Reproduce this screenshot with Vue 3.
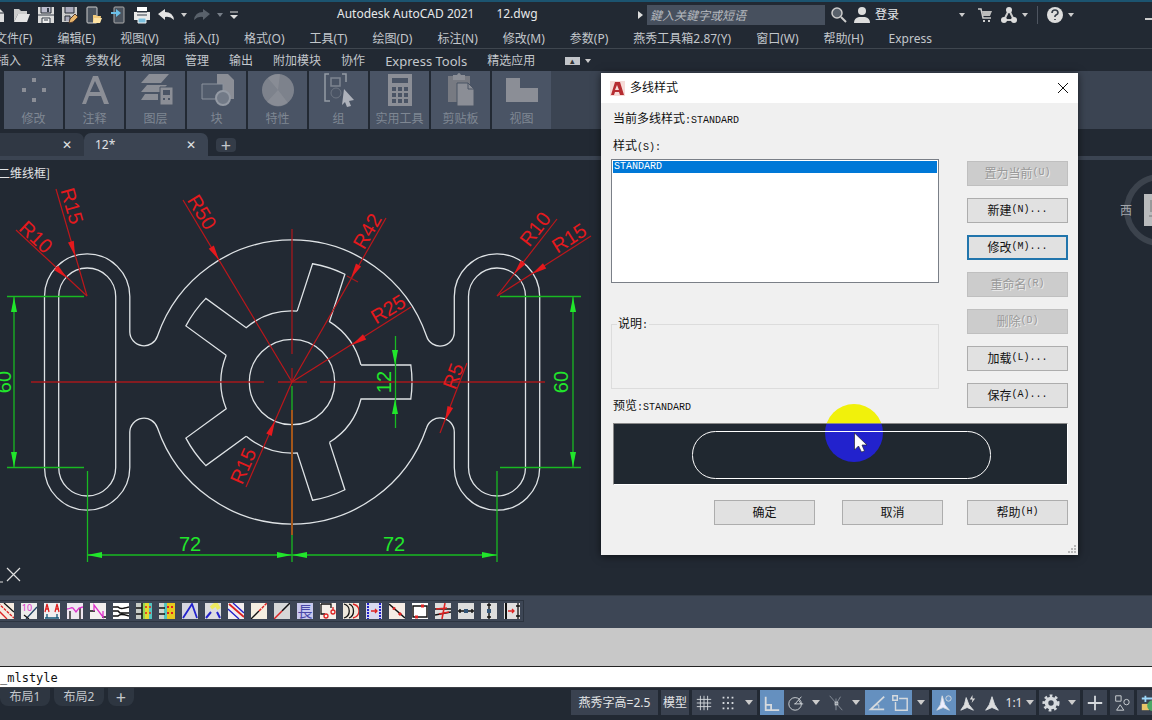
<script setup>
import { ref } from 'vue'

const menus = ['文件(F)', '编辑(E)', '视图(V)', '插入(I)', '格式(O)', '工具(T)', '绘图(D)', '标注(N)', '修改(M)', '参数(P)', '燕秀工具箱2.87(Y)', '窗口(W)', '帮助(H)', 'Express']
const ribbonTabs = ['插入', '注释', '参数化', '视图', '管理', '输出', '附加模块', '协作', 'Express Tools', '精选应用']

const search = ref('')
const style = ref('STANDARD')
const command = ref('_mlstyle')

const sideButtons = [
  { zh: '置为当前', en: '(U)', disabled: true },
  { zh: '新建', en: '(N)...' },
  { zh: '修改', en: '(M)...', active: true },
  { zh: '重命名', en: '(R)', disabled: true },
  { zh: '删除', en: '(D)', disabled: true },
  { zh: '加载', en: '(L)...' },
  { zh: '保存', en: '(A)...' }
]

// arrow head with its tip at (x, y), coming from (fx, fy)
const arrow = (x, y, fx, fy) => {
  const len = Math.hypot(x - fx, y - fy)
  const ux = (x - fx) / len
  const uy = (y - fy) / len
  const bx = x - ux * 15
  const by = y - uy * 15
  return `${x},${y} ${bx - uy * 3},${by + ux * 3} ${bx + uy * 3},${by - ux * 3}`
}

// radius dimensions: line from p to c, arrow tip at t, label position l, angle a
const radii = [
  { text: 'R10', p: [16, 230], c: [87, 296], t: [67, 278], l: [36, 237], a: 43 },
  { text: 'R15', p: [56, 189], c: [87, 296], t: [75, 256], l: [72, 206], a: 74 },
  { text: 'R50', p: [183, 200], c: [292, 382], t: [219, 260], l: [202, 212], a: 59 },
  { text: 'R42', p: [386, 218], c: [292, 382], t: [351, 278], l: [367, 231], a: -60 },
  { text: 'R25', p: [411, 307], c: [292, 382], t: [352, 345], l: [388, 309], a: -31 },
  { text: 'R10', p: [557, 219], c: [497, 296], t: [514, 274], l: [535, 229], a: -52 },
  { text: 'R15', p: [591, 236], c: [497, 296], t: [532, 274], l: [569, 238], a: -32 },
  { text: 'R5', p: [467, 363], c: [440, 433], t: [445, 421], l: [453, 376], a: -70 },
  { text: 'R15', p: [246, 487], c: [292, 382], t: [275, 421], l: [243, 466], a: -66 }
]

const dimArrows = [
  [14, 297, 14, 340], [14, 467, 14, 400],
  [573, 297, 573, 340], [573, 467, 573, 400],
  [87, 555, 120, 555], [292, 555, 260, 555],
  [292, 555, 320, 555], [497, 555, 460, 555],
  [395, 365, 395, 340], [395, 399, 395, 420]
]

const dimTexts = [
  { text: '60', l: [4, 382], a: -90 },
  { text: '60', l: [561, 382], a: -90 },
  { text: '12', l: [384, 382], a: -90 },
  { text: '72', l: [190, 544], a: 0 },
  { text: '72', l: [394, 544], a: 0 }
]

const K = '#111'
const R = '#d22'
const B = '#22c'
const M = '#d3c'
const tools = [
  { bg: '#f5ebe0', s: [[K, 'M6 0L16 9'], [R, 'M0 0L16 15', 1.3, '3 1'], [R, 'M0 7L9 16']] },
  { bg: '#ececec', t: '10', tc: M, s: [['#246', 'M5 16L16 4'], [K, 'M3 12L8 16']] },
  { bg: '#f1eeee', s: [[R, 'M1 9L3 1L5 9M2 6H5M11 9L13 1L15 9M12 6H15'], ['#157', 'M3 15V11M13 15V11M1 15H15']] },
  { bg: '#efe8f0', s: [[K, 'M3 16V8M13 16V5'], [M, 'M0 6C3 6 4 4 6 5L9 9L12 5L16 4']] },
  { bg: '#f4f0ef', s: [[K, 'M0 8H5M12 14H16'], [M, 'M4 8V2L13 14V8']] },
  { bg: '#fff', s: [[K, 'M0 4H5C7 6 9 6 16 4M0 8H5L7 10H16M0 13H5C7 11 9 11 16 13', 1.6]] },
  { bg: '#c9cdc8', s: [['#8fd45a', 'M8 0V16', 3], ['#e3db2e', 'M11 0V16', 4], ['#55c4c0', 'M14.500 0V16', 3], [K, 'M0 5H6M0 11H6M6 0V16', 1.6], [R, 'M9 4H15M9 10H15', 1.3, '2']] },
  { bg: '#d0d4d0', s: [['#55c4c0', 'M7 0V16', 4], ['#e8c81e', 'M12 0V16', 8], [K, 'M0 5H6M0 11H6', 1.6], [R, 'M8 4H16M8 10H16', 2, '2']] },
  { bg: '#d5d5df', s: [[B, 'M1 15L10 1L15 15', 1.8]] },
  { bg: '#dcdcdf', s: [['#eeea60', 'M6 5L11 1L14 6', 4], [B, 'M1 15L6 9M12 9L15 15', 2]] },
  { bg: '#f3eeee', s: [[B, 'M5 0L16 10M0 6L11 16'], [R, 'M1 1L16 14', 1.8]] },
  { bg: '#f5eee0', s: [[K, 'M0 16L8 8'], [R, 'M8 8L16 0', 1.5, '3 1']] },
  { bg: '#d7d7d7', s: [[K, 'M8 8L16 0', 1.5], [R, 'M0 16L8 8', 1.5]] },
  { bg: '#c9c9ee', t: '長', tc: '#4a48a8', s: [] },
  { bg: '#f5efe9', s: [[K, 'M1 1H11V5M1 1V11H5'], [R, 'M4 13A2 2 0 1 0 8 13A2 2 0 1 0 4 13M11 9A2 2 0 1 0 15 9A2 2 0 1 0 11 9M13 4V7']] },
  { bg: '#eee8dc', s: [[K, 'M1 1C8 3 8 13 1 15'], [K, 'M6 1C12 3 12 13 6 15'], [R, 'M10 1C18 3 18 13 10 15']] },
  { bg: '#d9d9ee', s: [[B, 'M2 0V16M14 0V16', 2, '2 1'], [R, 'M5 8H11M9 6L11 8L9 10']] },
  { bg: '#f5ece5', s: [[K, 'M0 1L16 15', 1.5], [R, 'M4 5L6 6M10 10L12 12', 3]] },
  { bg: '#fff', s: [[K, 'M1 3H15V14H1Z', 1.5], [R, 'M9 3H12M3 14H6', 3]] },
  { bg: '#ddd', s: [[K, 'M0 6H16M0 12L16 9', 1.6], [R, 'M10 0L7 16M1 6L12 5M4 11L14 9', 1.6]] },
  { bg: '#ddd', s: [[K, 'M0 8H16M2 6V10M14 6V10', 1.4], ['#357', 'M7 7H9V9H7Z', 2]] },
  { bg: '#ddd', s: [[K, 'M8 0V16M6 2H10M6 14H10', 1.4], ['#357', 'M7 7H9V9H7Z', 2]] },
  { bg: '#e2dfdf', s: [[K, 'M2 0V16', 2], [K, 'M14 0V16M12 3H16M12 13H16'], [R, 'M4 8H10M8 6L10 8L8 10']] }
]
</script>

<template>
  <div class="app">
    <header class="titlebar">
      <div class="quick">
        <button aria-label="新建"><svg width="18" height="18" viewBox="0 0 18 18"><path d="M3 2h7l5 5v9H3z" fill="#ddd" /><path d="M10 2v5h5" fill="none" stroke="#222933" /></svg></button>
        <button aria-label="打开"><svg width="18" height="18" viewBox="0 0 18 18"><path d="M1 3h5l2 2h6v3H5l-4 8z" fill="#ccc" /><path d="M5 8h12l-3 8H1z" fill="#e4e4e4" /></svg></button>
        <button aria-label="保存"><svg width="18" height="18" viewBox="0 0 18 18"><path d="M1 1h16v16H1z" fill="#ddd" /><path d="M4 1v6h10V1" fill="#bbc" stroke="#222933" /><path d="M10 2h2v4h-2z" fill="#333b46" /><path d="M1 9h16M5 17v-5h8v5" fill="#eee" stroke="#333b46" /><path d="M7 14h4" stroke="#333b46" /></svg></button>
        <button aria-label="另存为"><svg width="18" height="18" viewBox="0 0 18 18"><path d="M1 1h15v9l-7 6H1z" fill="#ccc" /><path d="M4 1v6h9V1M4 15v-5h5v5" fill="#aab" stroke="#222933" /><path d="M8 17l1-4 5-5 3 3-5 5z" fill="#e8b56c" stroke="#563b2b" /></svg></button>
        <button aria-label="从移动设备打开"><svg width="18" height="18" viewBox="0 0 18 18"><rect x="2" y="1" width="10" height="16" rx="1" fill="#4b535e" stroke="#ccc" /><path d="M8 9h3l1 1h4l-1 7H8z" fill="#f3ca7a" /><path d="M9 12h8l-2 5H8z" fill="#ffe4a5" /></svg></button>
        <button aria-label="保存到移动设备"><svg width="18" height="18" viewBox="0 0 18 18"><rect x="5" y="1" width="10" height="16" rx="1" fill="#4b535e" stroke="#aaa" /><path d="M2 6h5V3l5 4-5 4V8H2z" fill="#6cc0e8" /></svg></button>
        <button aria-label="打印"><svg width="18" height="18" viewBox="0 0 18 18"><path d="M4 1h10v4H4z" fill="#fff" /><path d="M1 6h16v8H1z" fill="#e8e8e8" /><path d="M4 9h10M4 6h10" stroke="#333b46" /><path d="M5 12h8v5H5z" fill="#7cc0de" stroke="#eee" /></svg></button>
        <button aria-label="放弃"><svg width="18" height="18" viewBox="0 0 18 18"><path d="M1 8l7-5v3q8 0 9 8-4-4-9-3v3z" fill="#e4e4e4" /></svg></button>
        <button class="drop" aria-label="放弃列表"><i class="caret"></i></button>
        <button class="redo" aria-label="重做"><svg width="18" height="18" viewBox="0 0 18 18"><path d="M17 8l-7-5v3q-8 0-9 8 4-4 9-3v3z" fill="#59616b" /></svg></button>
        <button class="drop" aria-label="重做列表"><i class="caret dim"></i></button>
        <button class="custom" aria-label="自定义"><svg width="10" height="10" viewBox="0 0 10 10"><path d="M1 2h8" stroke="#ddd" /><path d="M1 5h8L5 9z" fill="#ddd" /></svg></button>
      </div>
      <div class="doc-title"><span>Autodesk AutoCAD 2021</span><span>12.dwg</span></div>
      <div class="info">
        <svg width="5" height="8" viewBox="0 0 5 8"><path d="M0 0l5 4-5 4z" fill="#ddd" /></svg>
        <input v-model="search" class="search" type="text" placeholder="鍵入关鍵字或短语" aria-label="搜索">
        <button class="find" aria-label="查找"><svg width="18" height="18" viewBox="0 0 18 18"><circle cx="7" cy="7" r="5" fill="#59616b" stroke="#ccc" stroke-width="1.5" /><path d="M11 11l5 5" stroke="#ccc" stroke-width="2" /></svg></button>
        <button class="login"><svg width="18" height="18" viewBox="0 0 18 18"><circle cx="9" cy="5" r="4" fill="#ddd" /><path d="M1 17q0-5 5-6h6q5 1 5 6z" fill="#ddd" /></svg>登录</button>
        <i class="caret"></i>
        <button class="cart" aria-label="购物车"><svg width="16" height="16" viewBox="0 0 16 16"><path d="M1 2h3l2 9h8" fill="none" stroke="#ccc" stroke-width="1.5" /><path d="M5 4h10l-2 5H6z" fill="#bbb" /><path d="M6 13h2v2H6zM11 13h2v2h-2z" fill="#ccc" /></svg></button>
        <button class="apps" aria-label="应用程序"><svg width="18" height="18" viewBox="0 0 18 18"><path d="M9 4L4 14H14Z" fill="none" stroke="#ccc" stroke-width="2" /><circle cx="9" cy="4" r="3" fill="#ddd" /><circle cx="4" cy="14" r="3" fill="#ddd" /><circle cx="14" cy="14" r="3" fill="#ddd" /></svg><i class="caret"></i></button>
        <button class="help" aria-label="帮助"><svg width="18" height="18" viewBox="0 0 18 18"><circle cx="9" cy="9" r="8" fill="#ddd" /><path d="M6 7q0-3 3-3t3 3q0 1-2 2l-1 1v1M9 13v1" fill="none" stroke="#333b46" stroke-width="1.6" /></svg><i class="caret"></i></button>
        <button class="min" aria-label="最小化"></button>
      </div>
    </header>

    <nav class="menubar"><a v-for="m in menus" :key="m" href="#">{{ m }}</a></nav>
    <nav class="ribbon-tabs">
      <a v-for="t in ribbonTabs" :key="t" href="#" :class="{ latin: t === 'Express Tools' }">{{ t }}</a>
      <button class="collapse" aria-label="最小化功能区"><span>▴</span><i class="caret"></i></button>
    </nav>

    <div class="ribbon">
      <button><svg viewBox="0 0 40 40"><path d="M18 7h4v4h-4zM8 17h4v4H8zM28 17h4v4h-4zM18 27h4v4h-4z" /></svg>修改</button>
      <button><svg viewBox="0 0 40 40"><path d="M18 5h5l11 28h-5l-3-8H14l-3 8H7zM20 10l-5 11h10z" /></svg>注释</button>
      <button><svg viewBox="0 0 40 40"><path d="M13 3h20l-8 9H5zM11 14h20l-6 7H5zM9 23h13v6H5z" /><path d="M24 16h13v18H24z" stroke="#4a5465" /><path d="M27 19h7v5h-7zM27 27h2v2h-2zM32 27h2v2h-2zM27 31h7" fill="#4a5465" /></svg>图层</button>
      <button><svg viewBox="0 0 40 40"><path d="M20 3h11l6 6v19H20z" /><path d="M5 13h21v15H5z" fill="#525c6c" stroke="#8b929d" /><circle cx="26" cy="27" r="7" fill="#727a87" stroke="#949aa4" stroke-width="2" /></svg>块</button>
      <button><svg viewBox="0 0 40 40"><circle cx="20" cy="19" r="16" fill="#7d828c" /><path d="M20 19L10 7A16 16 0 0 1 22 3zM20 19L30 32A16 16 0 0 1 9 31z" fill="#9698a0" opacity=".45" /></svg>特性</button>
      <button><svg viewBox="0 0 40 40"><path d="M10 3H6v27h5M23 3h4v8" fill="none" stroke="#949aa4" stroke-width="1.5" /><path d="M12 7h9v8H12z" fill="none" stroke="#7d8490" stroke-width="1.5" /><circle cx="17" cy="22" r="5" fill="none" stroke="#6d7582" /><path d="M25 18l10 11-5 1 2 5-4 1-2-5-3 3z" fill="#aeb2bb" /></svg>组</button>
      <button><svg viewBox="0 0 40 40"><path d="M8 3h24v32H8z" /><path d="M12 7h16v5H12zM12 16h4v4h-4zM18 16h4v4h-4zM24 16h4v4h-4zM12 22h4v4h-4zM18 22h4v4h-4zM24 22h4v4h-4zM12 28h4v4h-4zM18 28h4v4h-4zM24 28h4v4h-4z" fill="#4a5465" /></svg>实用工具</button>
      <button><svg viewBox="0 0 40 40"><path d="M7 5h22v26H7z" fill="#777a82" /><path d="M12 4h4q2-4 4 0h4v5H12z" /><path d="M16 12h11l6 6v17H16z" stroke="#4a5465" /><path d="M27 12v6h6" fill="none" stroke="#4a5465" /></svg>剪贴板</button>
      <button><svg viewBox="0 0 40 40"><path d="M4 7h14v10h18v14H4z" /></svg>视图</button>
    </div>

    <div class="file-tabs">
      <div class="file-tab back"><button aria-label="关闭">✕</button></div>
      <div class="file-tab current"><span>12*</span><button aria-label="关闭">✕</button></div>
      <button class="add" aria-label="新图形">+</button>
    </div>

    <main class="canvas">
      <svg class="drawing" viewBox="0 160 1152 435" preserveAspectRatio="xMinYMin slice">
        <g class="solid">
          <path d="M129.8 332A14.2 14.2 0 0 0 157.5 336A142.2 142.2 0 0 1 426.5 336A14.2 14.2 0 0 0 454.3 332V296.5A42.600 42.600 0 0 1 539.7 296.5V467.5A42.600 42.600 0 0 1 454.3 467.5V432A14.2 14.2 0 0 0 426.5 428A142.2 142.2 0 0 1 157.5 428A14.2 14.2 0 0 0 129.8 432V467.5A42.600 42.600 0 0 1 44.5 467.5V296.5A42.600 42.600 0 0 1 129.8 296.5Z" />
          <rect x="58.7" y="268" width="57" height="228" rx="28.5" />
          <rect x="468.5" y="268" width="57" height="228" rx="28.5" />
          <circle cx="292" cy="382" r="42.7" />
          <g v-for="i in 5" :key="i" :transform="`translate(292 382) rotate(${i * 72})`">
            <path d="M69 -17H118.8A120 120 0 0 1 118.8 17H69A71 71 0 0 1 37.5 60.3" />
          </g>
        </g>
        <g class="center">
          <path d="M31 382H264M278 382H307M320 382H545M292 229V354M292 368V382M347 276L358 282" />
          <path class="axis" d="M292 410V535" />
        </g>
        <g class="dim">
          <path d="M7 296.5H84M7 467.5H84M500 296.5H581M500 467.5H581M14 297V467M573 297V467M87.500 471V562M497 471V562M87 555H497M292 386V410M292 535V562M395.500 336V428" />
          <polygon v-for="(d, i) in dimArrows" :key="i" :points="arrow(...d)" />
          <text v-for="(d, i) in dimTexts" :key="'t' + i" y="7" :transform="`translate(${d.l}) rotate(${d.a})`">{{ d.text }}</text>
        </g>
        <g class="radius">
          <template v-for="(r, i) in radii" :key="i">
            <path :d="`M${r.p}L${r.c}`" />
            <polygon :points="arrow(...r.t, ...r.p)" />
            <text y="7" :transform="`translate(${r.l}) rotate(${r.a})`">{{ r.text }}</text>
          </template>
        </g>
        <path class="ucs" d="M0 582H3M7 568L20 581M20 568L7 581" />
        <circle cx="1160" cy="210" r="33" fill="none" stroke="#3c434d" stroke-width="6" />
        <rect x="1144" y="194" width="32" height="32" fill="#b9bbbd" />
        <path d="M1149 216h3M1151 200v12" stroke="#777" />
        <text class="west" x="1126" y="215">西</text>
        <text class="view-name" x="24" y="178">二维线框]</text>
      </svg>
    </main>

    <div class="toolbar">
      <div class="tools">
        <button v-for="(t, i) in tools" :key="i" :aria-label="'工具 ' + (i + 1)">
          <svg width="16" height="16" viewBox="0 0 16 16">
            <rect width="16" height="16" :fill="t.bg" />
            <path v-for="(s, j) in t.s" :key="j" :d="s[1]" fill="none" :stroke="s[0]" :stroke-width="s[2] || 1.3" :stroke-dasharray="s[3]" />
            <text v-if="t.t" :x="t.t === '10' ? 6 : 8" :y="t.t === '10' ? 8 : 14" :font-size="t.t === '10' ? 9 : 15" text-anchor="middle" :fill="t.tc">{{ t.t }}</text>
          </svg>
        </button>
      </div>
    </div>
    <div class="history"></div>
    <input v-model="command" class="command" type="text" aria-label="命令">

    <footer class="status">
      <div class="layouts">
        <button>布局1</button><button>布局2</button><button class="plus">+</button>
      </div>
      <div class="status-items">
        <div class="group"><button class="height-btn">燕秀字高=2.5</button></div>
        <div class="group"><button class="model">模型</button></div>
        <div class="group">
          <button aria-label="栅格"><svg viewBox="0 0 20 20"><path d="M6 2v16M10 2v16M14 2v16M2 6h16M2 10h16M2 14h16" /></svg></button>
          <button aria-label="捕捉"><svg viewBox="0 0 20 20"><path d="M4 4h12M4 10h12M4 16h12" stroke-width="2" stroke-dasharray="2 3" /></svg></button>
          <button class="tiny" aria-label="捕捉设置"><i class="caret big"></i></button>
        </div>
        <div class="group snaps">
          <button class="on" aria-label="正交"><svg viewBox="0 0 20 20"><path d="M3 3v15h15M3 12h6v6" stroke-width="2" /></svg></button>
          <button aria-label="极轴"><svg viewBox="0 0 20 20"><circle cx="9" cy="11" r="7" /><path d="M9 11L16 3M8 11h10M13 7q2 2 2 4" /></svg></button>
          <button class="tiny" aria-label="极轴设置"><i class="caret big"></i></button>
          <button aria-label="等轴测"><svg viewBox="0 0 20 20"><path d="M3 2L17 18M10 5v13M9 13l6-10" stroke="#8b929c" /><path d="M9 9h3v3H9z" /></svg></button>
          <button class="tiny" aria-label="等轴测设置"><i class="caret big"></i></button>
          <button class="on" aria-label="对象捕捉追踪"><svg viewBox="0 0 20 20"><path d="M18 3L3 17h15" stroke-width="2" /><path d="M8 12h4v4" /></svg></button>
          <button class="on" aria-label="对象捕捉"><svg viewBox="0 0 20 20"><path d="M9 5h9v13H5V9" stroke-width="1.6" /><path d="M2 2h5v5H2z" stroke-width="1.6" /></svg></button>
          <button class="tiny" aria-label="捕捉选项"><i class="caret big"></i></button>
        </div>
        <div class="group">
          <button class="on" aria-label="注释可见性"><svg viewBox="0 0 20 20"><path d="M8 2l3 10 5 6-7-3-7 3 4-6z" fill="#eef" /><circle cx="15" cy="5" r="3" fill="#6a96c7" /></svg></button>
          <button aria-label="自动缩放"><svg viewBox="0 0 20 20"><path d="M8 4l3 8 5 6-7-3-7 3 4-6z" fill="#ddd" /><path d="M15 1l-3 5h3l-1 4 4-5h-3z" fill="#ddd" stroke-width="0" /></svg></button>
          <button aria-label="注释比例"><svg viewBox="0 0 20 20"><path d="M10 3l3 9 4 6-7-3-7 3 4-6z" fill="#ddd" /></svg></button>
          <button class="scale">1:1<i class="caret big"></i></button>
        </div>
        <div class="group">
          <button aria-label="工作空间"><svg viewBox="0 0 20 20"><circle cx="10" cy="10" r="5" stroke-width="4" /><circle cx="10" cy="10" r="8" stroke-width="3" stroke-dasharray="3" /></svg></button>
          <button class="tiny" aria-label="工作空间列表"><i class="caret big"></i></button>
        </div>
        <div class="group"><button aria-label="注释监视器"><svg viewBox="0 0 20 20"><path d="M10 2v16M2 10h16" stroke-width="2" /></svg></button></div>
        <div class="group"><button aria-label="隔离对象"><svg viewBox="0 0 20 20"><path d="M3 2h6v6H3zM8 12l4 6H4z" /><circle cx="15" cy="9" r="3" /></svg></button></div>
        <div class="group"><button aria-label="硬件加速"><svg viewBox="0 0 20 20"><path d="M2 5h12M6 2v7" stroke="#9cd7fa" stroke-width="2" /><path d="M2 11h8v7H2z" fill="#e9c568" stroke="none" /><circle cx="14" cy="13" r="6" fill="#4ca766" stroke="none" /></svg></button></div>
      </div>
    </footer>

    <section class="dialog" role="dialog" aria-labelledby="dlg-title">
      <header class="dialog-title">
        <svg width="15" height="15" viewBox="0 0 15 15"><rect width="15" height="15" fill="#f6dcd9" /><path d="M5 1h5l4 13h-4l-1-3H5l-1 3H1zM7 4L5 9h4z" fill="#b62c31" /></svg>
        <h1 id="dlg-title">多线样式</h1>
        <button aria-label="关闭"><svg width="12" height="12" viewBox="0 0 12 12"><path d="M1 1l10 10M11 1L1 11" stroke="#111" /></svg></button>
      </header>
      <div class="dialog-body">
        <p class="line">当前多线样式<span class="mono">:STANDARD</span></p>
        <label class="line" for="styles">样式<span class="mono">(S):</span></label>
        <div class="columns">
          <div class="left">
            <select id="styles" v-model="style" size="8"><option>STANDARD</option></select>
            <fieldset><legend>说明<span class="mono">:</span></legend></fieldset>
            <p class="line">预览<span class="mono">:STANDARD</span></p>
          </div>
          <div class="side">
            <button v-for="b in sideButtons" :key="b.zh" class="btn" :class="{ active: b.active }" :disabled="b.disabled">{{ b.zh }}<span class="mono">{{ b.en }}</span></button>
          </div>
        </div>
        <div class="preview">
          <svg width="100%" height="60" viewBox="0 0 453 60">
            <defs>
              <clipPath id="above"><rect x="200" y="-40" width="90" height="39" /></clipPath>
              <clipPath id="below"><rect x="200" y="0" width="90" height="60" /></clipPath>
            </defs>
            <circle cx="240" cy="9" r="29" fill="#f1f10b" clip-path="url(#above)" />
            <circle cx="240" cy="9" r="29" fill="#2222cd" clip-path="url(#below)" />
            <rect x="78.5" y="7.5" width="298" height="47" rx="23" fill="none" stroke="#fff" />
            <path d="M240.500 9V26L244.500 22L247.500 28L250.500 27L248 21H253Z" fill="#fff" stroke="#223" stroke-width=".7" />
          </svg>
        </div>
        <div class="actions">
          <button class="btn">确定</button>
          <button class="btn cancel">取消</button>
          <button class="btn">帮助<span class="mono">(H)</span></button>
        </div>
      </div>
      <svg class="grip" width="9" height="9" viewBox="0 0 9 9"><path d="M6 0h2v2H6zM3 3h2v2H3zM6 3h2v2H6zM0 6h2v2H0zM3 6h2v2H3zM6 6h2v2H6z" fill="#b8b8b8" /></svg>
    </section>
  </div>
</template>

<style>
body {
  margin: 0;
  overflow: hidden;
  background: #222933;
}
</style>

<style scoped>
* {
  box-sizing: border-box;
}

.app {
  position: relative;
  min-height: 100vh;
  display: flex;
  flex-direction: column;
  overflow: hidden;
  background: #222933;
  color: #c3c7cc;
  font: 12px/16px "Noto Sans", "Noto Sans CJK SC", sans-serif;
}

button {
  display: flex;
  align-items: center;
  justify-content: center;
  padding: 0;
  border: 0;
  background: none;
  color: inherit;
  font: inherit;
  white-space: nowrap;
}

a {
  color: inherit;
  text-decoration: none;
  white-space: nowrap;
}

svg {
  display: block;
  flex: none;
}

.caret {
  border: 3px solid transparent;
  border-top: 4px solid #ccc;
  border-bottom: 0;
}

.caret.dim {
  border-top-color: #777e88;
}

.caret.big {
  border-width: 5px 4px 0;
}

/* title bar */
.titlebar {
  display: flex;
  align-items: center;
  height: 28px;
  border-top: 2px solid #1c5470;
}

.quick {
  display: flex;
  margin-left: -14px;
}

.quick button {
  width: 24px;
}

.quick .drop {
  width: 12px;
}

.quick .custom {
  width: 16px;
}

.doc-title {
  display: flex;
  gap: 22px;
  margin-left: 95px;
  padding-bottom: 2px;
  color: #e6e8ea;
  white-space: nowrap;
}

.info {
  display: flex;
  align-items: center;
  width: 514px;
  margin-left: auto;
  color: #e6e8ea;
}

.search {
  width: 178px;
  height: 20px;
  margin-left: 4px;
  padding: 0 3px 2px;
  border: 0;
  background: #47505e;
  color: #ccc;
  font: italic 12px "Noto Sans CJK SC", sans-serif;
}

.search::placeholder {
  color: #b5b9bf;
}

.find {
  margin-left: 5px;
}

.login {
  gap: 4px;
  margin: 0 60px 0 5px;
}

.cart {
  margin-left: 12px;
}

.apps,
.help {
  gap: 4px;
  margin-left: 7px;
}

.help {
  margin-left: 9px;
  padding-left: 8px;
  border-left: 1px solid #4e5560;
}

.min {
  width: 7px;
  height: 2px;
  margin: 8px 0 0 auto;
  background: #ccc;
}

/* menus */
.menubar,
.ribbon-tabs {
  display: flex;
  align-items: center;
  height: 21px;
}

.menubar {
  gap: 25px;
  margin-left: -5px;
  padding-top: 1px;
  border-bottom: 1px solid #3f464f;
}

.ribbon-tabs {
  gap: 20px;
  height: 22px;
  margin-left: -3px;
  padding-top: 1px;
}

.ribbon-tabs .latin {
  font-size: 13px;
}

.collapse {
  gap: 5px;
  margin-left: 10px;
}

.collapse span {
  width: 15px;
  height: 8px;
  background: #c2c5ca;
  color: #333;
  font-size: 9px;
  line-height: 7px;
}

.ribbon {
  display: flex;
  gap: 2px;
  height: 58px;
  padding-left: 4px;
  background: linear-gradient(90deg, #222933 550px, #3b4452 550px);
}

.ribbon button {
  flex-direction: column;
  justify-content: flex-start;
  width: 59px;
  background: #4a5465;
  color: #7f8793;
}

.ribbon svg {
  width: 40px;
  height: 40px;
  fill: #8b8e96;
}

.file-tabs {
  display: flex;
  align-items: flex-end;
  height: 31px;
  border-bottom: 4px solid #3b4452;
}

.file-tab {
  display: flex;
  align-items: center;
  height: 23px;
  color: #e0e2e5;
}

.file-tab.back {
  width: 84px;
  padding-left: 62px;
  background: #303844;
  border-radius: 0 7px 0 0;
}

.file-tab.current {
  justify-content: space-between;
  width: 124px;
  padding: 0 12px 0 11px;
  background: #3b4452;
  border-radius: 7px 7px 0 0;
}

.add {
  width: 20px;
  height: 14px;
  margin: 0 0 4px 8px;
  background: #343c48;
  border-radius: 4px;
  font-size: 18px;
}

/* model space */
.canvas {
  flex: 1;
  min-height: 0;
}

.drawing {
  width: 100%;
  height: 435px;
  font-family: "Liberation Sans", Arial, sans-serif;
  font-size: 20px;
  fill: none;
}

.drawing text {
  text-anchor: middle;
}

.solid {
  stroke: #dfe3e6;
  stroke-width: 1.3;
}

.center {
  stroke: #a5181d;
  stroke-width: 1.3;
}

.center .axis {
  stroke: #a3561a;
  stroke-width: 2;
}

.dim path {
  stroke: #19b922;
  stroke-width: 1.3;
}

.dim polygon,
.dim text {
  fill: #21e62b;
}

.radius path {
  stroke: #bd171b;
  stroke-width: 1.2;
}

.radius polygon,
.radius text {
  fill: #e5191d;
}

.ucs {
  stroke: #e0e0e0;
  stroke-width: 1.2;
}

.drawing .west,
.drawing .view-name {
  fill: #a2a6ab;
  font: 12px "Noto Sans CJK SC", sans-serif;
}

.drawing .view-name {
  fill: #e2e4e6;
}

/* toolbar and command line */
.toolbar {
  height: 33px;
  padding: 4px 0;
  background: #3d4655;
  border-top: 1px solid #343c47;
}

.tools {
  display: flex;
  align-items: center;
  gap: 7px;
  width: 527px;
  height: 22px;
  margin-left: -3px;
  border: 1px solid #2c3440;
}

.history {
  height: 39px;
  background: #c8c8c8;
  border-bottom: 1px solid #222;
}

.command {
  width: 100%;
  height: 20px;
  padding: 2px 0 0;
  border: 0;
  background: #fff;
  color: #111;
  font: 12px "DejaVu Sans Mono", monospace;
}

/* status bar */
.status {
  display: flex;
  justify-content: space-between;
  height: 33px;
  border-top: 1px solid #3b3f45;
}

.layouts {
  display: flex;
  gap: 4px;
}

.layouts button {
  width: 50px;
  height: 18px;
  background: #2e3641;
  border-radius: 0 0 8px 8px;
}

.layouts .plus {
  width: 26px;
  font-size: 18px;
}

.status-items {
  display: flex;
  gap: 3px;
  width: 581px;
  height: 27px;
  padding-top: 2px;
  overflow: hidden;
  color: #e2e4e6;
}

.group {
  display: flex;
  flex: none;
  background: #3a4250;
}

.group button {
  width: 24px;
  height: 25px;
}

.group svg {
  width: 18px;
  height: 18px;
  fill: none;
  stroke: #d6dade;
}

.group .tiny {
  width: 17px;
}

.group .on {
  background: #6590bf;
}

.group .height-btn {
  width: 87px;
}

.group .model {
  width: 28px;
}

.group .scale {
  gap: 4px;
  width: 32px;
}

.snaps {
  width: 169px;
}

/* multiline style dialog */
.dialog {
  position: absolute;
  top: 73px;
  left: 601px;
  width: 477px;
  background: #f0f0f0;
  color: #111;
  box-shadow: 0 1px 8px rgba(0, 0, 0, .6);
}

.dialog-title {
  display: flex;
  align-items: center;
  height: 30px;
  padding: 0 9px;
  background: #fff;
}

.dialog-title h1 {
  flex: 1;
  margin: 0 0 0 5px;
  font-size: 12px;
  font-weight: 400;
}

.dialog-body {
  padding: 7px 10px 30px;
  font-family: "Noto Sans CJK SC", sans-serif;
}

.line {
  display: block;
  margin: 0 2px;
  line-height: 16px;
}

label.line {
  margin-top: 8px;
}

.mono {
  font: 10px/16px "Liberation Mono", monospace;
}

.columns {
  display: flex;
  gap: 28px;
  margin-top: 3px;
}

.left {
  flex: 1;
}

select {
  display: block;
  width: 100%;
  height: 124px;
  padding: 1px;
  border: 1px solid #7a7f87;
  border-radius: 0;
  outline: 0;
  background: #fff;
  font: 10px/12px "Liberation Mono", monospace;
}

option {
  min-height: 12px;
  padding: 0 1px;
}

option:checked {
  background: #0078d7 linear-gradient(#0078d7, #0078d7);
  color: #fff;
}

fieldset {
  height: 74px;
  margin: 32px 0 8px;
  padding: 0;
  border: 1px solid #dcdcdc;
}

legend {
  margin-left: 5px;
  padding: 0 1px;
  line-height: 16px;
}

.side {
  display: flex;
  flex-direction: column;
  gap: 12px;
  margin-top: 2px;
}

.btn {
  width: 101px;
  height: 25px;
  padding-bottom: 2px;
  border: 1px solid #adadad;
  background: #e1e1e1;
}

.btn.active {
  border: 2px solid #2175ac;
}

.btn:disabled {
  border-color: #bfbfbf;
  background: #ccc;
  color: #999;
  text-shadow: 1px 1px #eee;
}

.preview {
  height: 62px;
  margin: 7px 0 0 2px;
  border: 1px solid #888;
  border-right-color: #fff;
  border-bottom-color: #fff;
  background: #202830;
}

.preview svg {
  overflow: visible;
}

.actions {
  display: flex;
  justify-content: flex-end;
  gap: 24px;
  margin-top: 15px;
}

.actions .cancel {
  margin-left: 3px;
}

.grip {
  position: absolute;
  right: 1px;
  bottom: 1px;
}
</style>
